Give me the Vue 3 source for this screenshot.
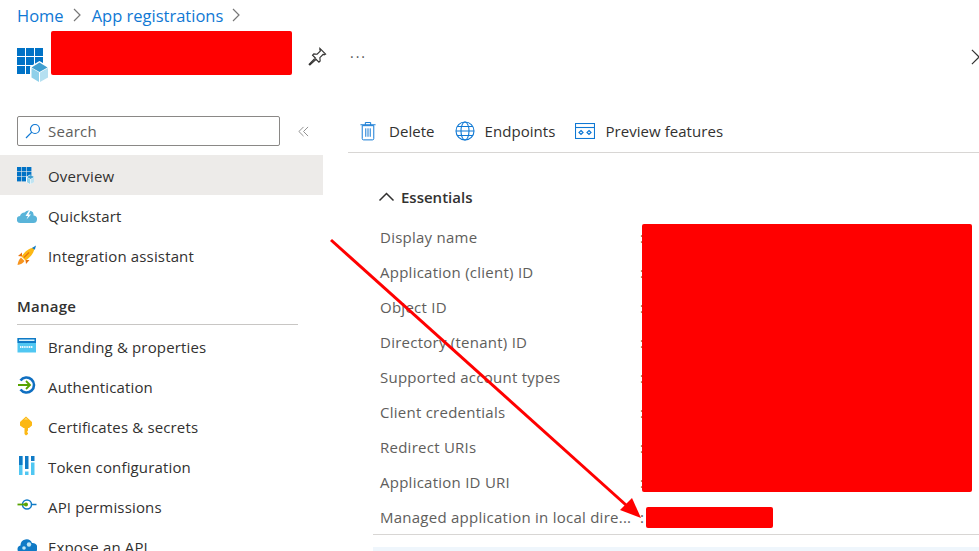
<template>
  <div class="page">
    <nav class="crumbs">
      <a>Home</a>
      <svg class="crumb-sep" viewBox="0 0 10 14"><path d="M2 1l6 6-6 6" /></svg>
      <a>App registrations</a>
      <svg class="crumb-sep" viewBox="0 0 10 14"><path d="M2 1l6 6-6 6" /></svg>
    </nav>

    <header class="title-row">
      <svg class="app-icon" viewBox="0 0 32 34">
        <rect v-for="c in gridCells" :key="c.x + '-' + c.y" :x="c.x" :y="c.y" width="8" height="8" fill="#0072c6" />
        <path d="M13 18.500L22.500 13 32 18.500V29l-9.500 5.500L13 29z" fill="#fff" />
        <path d="M14.500 19.500l8-5 8 5-8 4.500z" fill="#3f9fd0" />
        <path d="M14.500 20l7.500 4.500V34l-7.500-4.500z" fill="#8fd0ea" />
        <path d="M31 20l-8 4.500V34l8-4.500z" fill="#b5e0f1" />
      </svg>
      <div class="title-space"></div>
      <svg class="pin" viewBox="0 0 20 20">
        <path d="M12.500 1.500l6 6-1.500.8-1-.6-3.500 3.500.3 3.500-1.300 1.300-3-3L2 19l-.8-.8 6.600-6.600-3-3 1.300-1.300 3.500.3 3.500-3.500-.6-1z" />
      </svg>
      <span class="more">···</span>
      <svg class="collapse-right" viewBox="0 0 10 18"><path d="M1 1l8 8-8 8" /></svg>
    </header>

    <div class="body">
      <aside class="side">
        <div class="search-row">
          <div class="search">
            <svg class="search-icon" viewBox="0 0 16 16"><circle cx="10" cy="6" r="4.500" /><path d="M6.800 9.200L1 15" /></svg>
            <span>Search</span>
          </div>
          <svg class="dbl" viewBox="0 0 12 12"><path d="M6 1L1 6l5 5M11 1L6 6l5 5" /></svg>
        </div>

        <a class="item active">
          <svg class="ico" viewBox="0 0 20 20">
            <rect v-for="c in smallCells" :key="c.x + '-' + c.y" :x="c.x" :y="c.y" width="4.400" height="4.400" fill="#0072c6" />
            <path d="M9 12l4-2.500 4 2.500v5l-4 2.500-4-2.500z" fill="#fff" />
            <path d="M10 12l3.500-2 3.500 2-3.500 2z" fill="#3f9fd0" />
            <path d="M10 12.500l3 1.800V19l-3-1.800z" fill="#8fd0ea" />
            <path d="M17 12.500l-3.500 1.800V19l3.500-1.800z" fill="#c0e4f2" />
          </svg>
          Overview
        </a>
        <a class="item">
          <svg class="ico" viewBox="0 0 20 20">
            <path d="M3.500 18a3.500 3.500 0 0 1-.5-7 5 5 0 0 1 4.500-3.500A6 6 0 0 1 14 6a4 4 0 0 1 2.500 4.500A3.700 3.700 0 0 1 16 18z" fill="#59b4d9" />
            <path d="M12 5.500L8.500 11h2.500l-1.500 3.500L14 9.500h-2.500l2-4z" fill="#fff" />
          </svg>
          Quickstart
        </a>
        <a class="item">
          <svg class="ico" viewBox="0 0 20 20">
            <path d="M.5 20c.5-3 1.500-6 3.500-7.500l3.500 3.500C6 18.500 3.500 19.500.5 20z" fill="#f7941d" />
            <path d="M5 7.500L1 11l4 .5zM12.500 15L9 19l-.5-4z" fill="#e8710a" />
            <path d="M4.500 11.500C8 6 12 3.500 16.500 2.500L17.500 3.500C16.500 8 14 12 8.500 15.500z" fill="#fcb814" />
            <path d="M15 2.900L19 .5l-1.200 4.200z" fill="#0f7ac6" />
            <path d="M7 12.500l5-5" stroke="#e8710a" stroke-width="1.200" />
          </svg>
          Integration assistant
        </a>

        <h3 class="group">Manage</h3>

        <a class="item">
          <svg class="ico" viewBox="0 0 20 20">
            <rect x="0.500" y="2" width="18.500" height="14.500" fill="#50c7f2" />
            <rect x="0.500" y="2" width="18.500" height="5" fill="#0f7ac6" />
            <rect x="2" y="3.500" width="15.500" height="1.500" fill="#d8f2fb" />
            <path d="M3 11h13" stroke="#eaf9fe" stroke-width="2" stroke-dasharray="1.200 .6" />
          </svg>
          Branding &amp; properties
        </a>
        <a class="item">
          <svg class="ico" viewBox="0 0 20 20">
            <path d="M3.500 4.500a7.500 7.500 0 1 1 0 9" fill="none" stroke="#0f6fc1" stroke-width="2.600" />
            <path d="M1 9h12M9 5l4 4-4 4" fill="none" stroke="#57a300" stroke-width="1.800" />
          </svg>
          Authentication
        </a>
        <a class="item">
          <svg class="ico" viewBox="0 0 20 20">
            <path d="M9 0.500L3 6v3.500l3.500 2.500h1v6l1.500 1.500 2-1.500V17l-1-1 1-1.500V12h1L15 9.500V6z" fill="#fcb814" />
            <path d="M7 3.500h4L9 2z" fill="#fde08a" />
          </svg>
          Certificates &amp; secrets
        </a>
        <a class="item">
          <svg class="ico" viewBox="0 0 20 20">
            <rect x="2" y="0" width="3.500" height="19" fill="#50c7f2" />
            <rect x="2" y="0" width="3.500" height="9" fill="#0f7ac6" />
            <rect x="8" y="0" width="3.500" height="13" fill="#0f7ac6" />
            <rect x="8" y="15.500" width="3.500" height="3.500" fill="#50c7f2" />
            <rect x="14" y="0" width="3.500" height="5" fill="#0f7ac6" />
            <rect x="14" y="6.500" width="3.500" height="12.500" fill="#50c7f2" />
          </svg>
          Token configuration
        </a>
        <a class="item">
          <svg class="ico" viewBox="0 0 20 20">
            <path d="M14 8.500h5.500" stroke="#0f7ac6" stroke-width="1.500" />
            <circle cx="10" cy="8.500" r="4.500" fill="none" stroke="#0f7ac6" stroke-width="1.500" />
            <path d="M.500 8.500H9" stroke="#57a300" stroke-width="1.800" />
            <circle cx="9" cy="8.500" r="2" fill="#57a300" />
          </svg>
          API permissions
        </a>
        <a class="item">
          <svg class="ico" viewBox="0 0 20 20">
            <path d="M4 17a3.800 3.800 0 0 1-.5-7.500A6 6 0 0 1 15 7a5 5 0 0 1 1 10z" fill="#0f7ac6" />
            <circle cx="7" cy="12" r="1.800" fill="#bfe6f5" />
            <circle cx="12" cy="8.500" r="2.200" fill="#bfe6f5" />
          </svg>
          Expose an API
        </a>
      </aside>

      <main class="main">
        <div class="commands">
          <button class="cmd">
            <svg class="cmd-icon trash" viewBox="0 0 18 22">
              <path d="M2.500 5h13v14.500a1.500 1.500 0 0 1-1.500 1.500H4a1.500 1.500 0 0 1-1.500-1.500zM.500 4h17M6 4V1.500h6V4M6.500 8v9.500M9 8v9.500M11.500 8v9.500" />
            </svg>
            Delete
          </button>
          <button class="cmd">
            <svg class="cmd-icon" viewBox="0 0 20 20">
              <circle cx="10" cy="10" r="9" /><ellipse cx="10" cy="10" rx="4" ry="9" /><path d="M1 10h18M2.200 5.500h15.600M2.200 14.500h15.600" />
            </svg>
            Endpoints
          </button>
          <button class="cmd">
            <svg class="cmd-icon wide" viewBox="0 0 20 16">
              <rect x=".5" y=".5" width="19" height="15" /><path d="M.5 4.500h19" />
              <path d="M6 7.500l2 2-2 2-2-2zM14 7.500l2 2-2 2-2-2z" stroke-width="1.200" />
            </svg>
            Preview features
          </button>
        </div>

        <section class="essentials">
          <div class="ess-head">
            <svg class="chev" viewBox="0 0 16 10"><path d="M1 8.500l7-7 7 7" /></svg>
            <span>Essentials</span>
          </div>
          <div class="rows">
            <div v-for="label in labels" :key="label" class="row">
              <span class="label">{{ label }}</span>
              <span class="colon">:</span>
            </div>
          </div>
          <div class="band"></div>
        </section>
      </main>
    </div>

    <!-- redactions and arrow drawn over the screenshot -->
    <div class="redact r-title"></div>
    <div class="redact r-values"></div>
    <div class="redact r-small"></div>
    <svg class="arrow" viewBox="0 0 979 551">
      <path d="M331 240L626 505" stroke="#f00" stroke-width="3" fill="none" />
      <path d="M641 518L620 510L632 498z" fill="#f00" />
    </svg>
  </div>
</template>

<script setup>
const gridCells = []
for (const y of [0, 9, 18]) {
  for (const x of [0, 9, 18]) gridCells.push({ x, y })
}

const smallCells = []
for (const y of [2, 7, 12]) {
  for (const x of [0, 5, 10]) smallCells.push({ x, y })
}

const labels = [
  'Display name',
  'Application (client) ID',
  'Object ID',
  'Directory (tenant) ID',
  'Supported account types',
  'Client credentials',
  'Redirect URIs',
  'Application ID URI',
  'Managed application in local dire...',
]
</script>

<style>
html, body {
  margin: 0;
  overflow: hidden;
  background: #fff;
}
</style>

<style scoped>
.page {
  position: relative;
  width: 979px;
  height: 551px;
  overflow: hidden;
  font-family: "Open Sans", "Noto Sans", sans-serif;
  font-size: 15px;
  letter-spacing: .25px;
  color: #323130;
}

.crumbs {
  display: flex;
  align-items: center;
  height: 30px;
  padding-left: 17px;
  font-size: 16.500px;
  letter-spacing: 0;
  color: #0f78d4;
}

.crumb-sep {
  width: 10px;
  height: 14px;
  margin: 0 10px 0 8px;
  fill: none;
  stroke: #777;
  stroke-width: 1.2;
}

.title-row {
  display: flex;
  align-items: center;
  height: 53px;
  padding-left: 17px;
}

.app-icon {
  width: 32px;
  height: 34px;
  margin-top: 16px;
}

.title-space {
  width: 259px;
}

.pin {
  width: 19px;
  height: 19px;
  fill: none;
  stroke: #323130;
  stroke-width: 1.200;
}

.more {
  margin-left: 23px;
  font-size: 14px;
  letter-spacing: 2px;
  color: #555;
}

.collapse-right {
  width: 9px;
  height: 18px;
  margin-left: auto;
  margin-right: -1px;
  fill: none;
  stroke: #323130;
  stroke-width: 1.300;
}

.body {
  display: flex;
}

.side {
  width: 323px;
  flex: none;
}

.search-row {
  display: flex;
  align-items: center;
  box-sizing: border-box;
  height: 72px;
  padding: 24px 0 0 17px;
}

.search {
  display: flex;
  align-items: center;
  gap: 7px;
  box-sizing: border-box;
  width: 263px;
  height: 30px;
  padding-left: 7px;
  border: 1px solid #8a8886;
  border-radius: 2px;
  color: #605e5c;
}

.search-icon {
  width: 16px;
  height: 16px;
  fill: none;
  stroke: #0f78d4;
  stroke-width: 1.200;
}

.dbl {
  width: 11px;
  height: 11px;
  margin-left: 18px;
  fill: none;
  stroke: #888;
  stroke-width: 1;
}

.item {
  display: flex;
  align-items: center;
  gap: 11px;
  box-sizing: border-box;
  height: 40px;
  padding: 1px 0 0 17px;
  letter-spacing: .15px;
}

.item.active {
  background: #edebe9;
}

.ico {
  width: 20px;
  height: 20px;
  flex: none;
  margin-top: -1px;
}

.group {
  box-sizing: border-box;
  width: 281px;
  height: 40px;
  margin: 10px 0 1px 17px;
  padding-top: 11px;
  font-size: 15px;
  line-height: 20px;
  font-weight: 600;
  color: #323130;
  border-bottom: 1px solid #c8c6c4;
}

.main {
  flex: 1;
  min-width: 0;
  padding-left: 25px;
}

.commands {
  display: flex;
  align-items: center;
  gap: 20px;
  box-sizing: border-box;
  height: 70px;
  margin-right: -30px;
  padding: 27px 0 0 12px;
  border-bottom: 1px solid #d8d6d4;
}

.cmd {
  display: flex;
  align-items: center;
  gap: 10px;
  padding: 0;
  border: 0;
  background: none;
  font: inherit;
  letter-spacing: .05px;
  color: #323130;
}

.cmd-icon {
  width: 20px;
  height: 20px;
  fill: none;
  stroke: #0f78d4;
  stroke-width: 1.100;
}

.cmd-icon.trash {
  width: 16px;
  height: 22px;
  margin-right: 3px;
}

.cmd-icon.wide {
  height: 16px;
}

.essentials {
  padding-left: 25px;
}

.ess-head {
  display: flex;
  align-items: center;
  gap: 6px;
  height: 44px;
  margin-top: 22px;
  margin-left: 5px;
  font-weight: 600;
  letter-spacing: 0;
  color: #323130;
}

.chev {
  width: 17px;
  height: 10px;
  fill: none;
  stroke: #323130;
  stroke-width: 1.500;
}

.rows {
  margin: 0 -30px 0 7px;
}

.row {
  display: flex;
  align-items: center;
  height: 35px;
  color: #605e5c;
}

.label {
  width: 260px;
  white-space: nowrap;
}

.colon {
  width: 6px;
}

.band {
  height: 20px;
  margin-right: -30px;
  border-top: 1px solid #d8d6d4;
}

.band::after {
  content: "";
  display: block;
  height: 10px;
  margin-top: 12px;
  background: #eff6fc;
}

.redact {
  position: absolute;
  background: #f00;
  border-radius: 2px;
}

.r-title {
  left: 51px;
  top: 31px;
  width: 241px;
  height: 44px;
}

.r-values {
  left: 642px;
  top: 224px;
  width: 330px;
  height: 268px;
}

.r-small {
  left: 646px;
  top: 507px;
  width: 127px;
  height: 21px;
}

.arrow {
  position: absolute;
  left: 0;
  top: 0;
  width: 979px;
  height: 551px;
  pointer-events: none;
}
</style>
